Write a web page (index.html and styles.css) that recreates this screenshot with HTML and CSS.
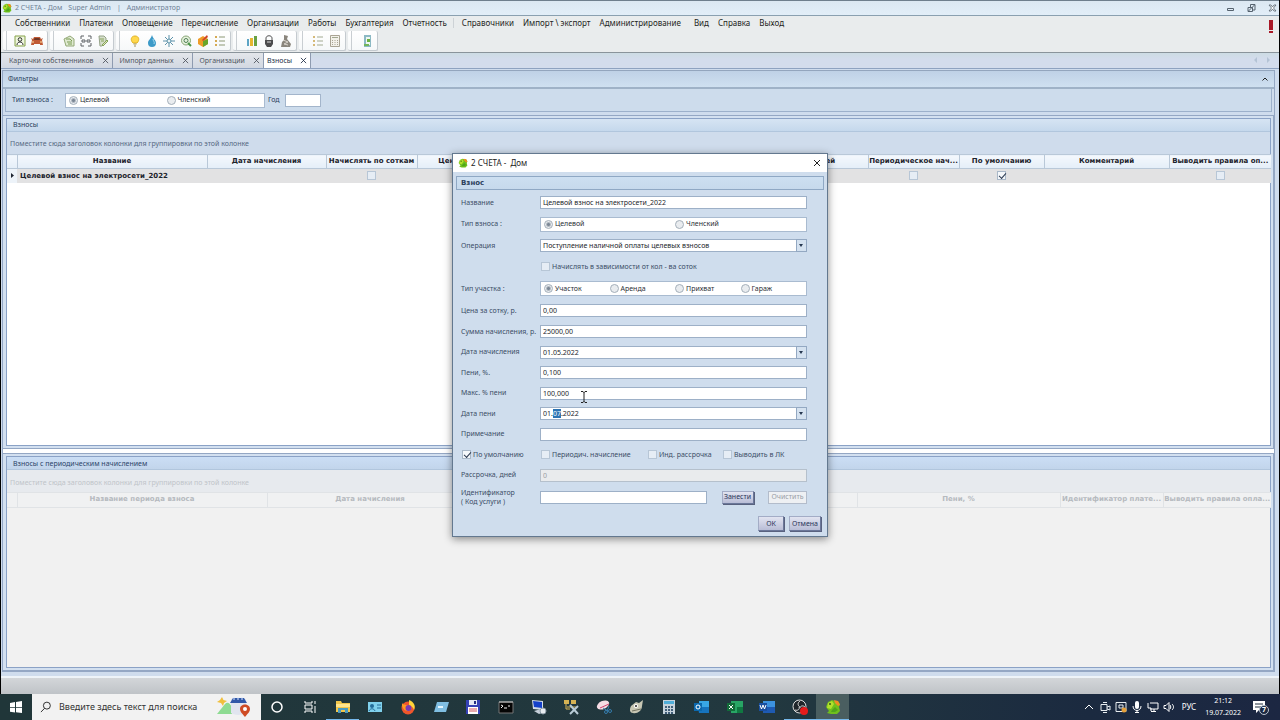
FILE: index.html
```html
<!DOCTYPE html>
<html lang="ru">
<head>
<meta charset="utf-8">
<title>2 СЧЕТА - Дом</title>
<link rel="stylesheet" href="styles.css">
<script src="app.js" defer></script>
</head>
<body>
<svg class="defs" aria-hidden="true">
  <symbol id="dino" viewBox="0 0 16 16"><path fill="#6fc01c" d="M1 8 3 3l4-2 3 1 3 0 2 3-1 3 1 4-3 3H6l-4-1 2-2z"/><path fill="#b2e02c" d="m3 4 4-2 2 3-3 5-4-1z"/><path fill="#f08c22" d="m9 1 4 1 2 4-2 1-3-3z"/><path fill="#4fa51b" d="m7 11 3-3 3 3-3 2H6z"/><circle cx="5" cy="5" r="1" fill="#365b13"/></symbol>
  <symbol id="cross" viewBox="0 0 8 8"><path d="m1 1 6 6M7 1 1 7" stroke="currentColor" fill="none"/></symbol>
</svg>
<div class="app">
  <header class="titlebar">
    <svg class="logo"><use href="#dino"/></svg>
    <span>2 СЧЕТА - Дом</span><span>Super Admin</span><span>|</span><span>Администратор</span>
    <div class="window-buttons">
      <button aria-label="Свернуть"><svg viewBox="0 0 8 8"><path d="M1 4.500h6v2H1z" fill="none" stroke="#56636f"/></svg></button>
      <button aria-label="Восстановить"><svg viewBox="0 0 8 8"><path d="M.5 3.500h4.500v4H.5zM3 3V.5h4.500V6H5M1 7l6-6" fill="none" stroke="#56636f"/></svg></button>
      <button aria-label="Закрыть"><svg viewBox="0 0 8 8"><path d="M.5 1h2L4 3l1.500-2h2L5 4l2.500 3h-2L4 5 2.500 7h-2L3 4z" fill="#fff" stroke="#56636f" stroke-width=".8"/></svg></button>
    </div>
  </header>
  <div class="ribbon">
    <nav class="menu">
      <button>Собственники</button><button>Платежи</button><button>Оповещение</button><button>Перечисление</button><button>Организации</button><button>Работы</button><button>Бухгалтерия</button><button>Отчетность</button><button class="split">Справочники</button><button>Импорт \ экспорт</button><button>Администрирование</button><button class="spaced">Вид</button><button>Справка</button><button>Выход</button>
    </nav>
    <div class="toolbar">
      <div class="tools first">
        <button aria-label="Собственник"><svg viewBox="0 0 12 12"><path d="M1 1h10v10H1z" fill="#eef6dc" stroke="#86a24a"/><circle cx="6" cy="4.500" r="1.800" fill="none" stroke="#333"/><path d="M3 10c0-4 6-4 6 0" fill="#fff" stroke="#333"/></svg></button>
        <button aria-label="Автомобиль"><svg viewBox="0 0 12 12"><path d="m0 3 2 1 1-2h6l1 2 2-1-1 2 1 5H9V9H3v1H0l1-5z" fill="#c05a35"/><path d="M3.500 3h5l.5 2H3z" fill="#6e3524"/><path d="M1 7h2m6 0h2" stroke="#ffe0a0"/></svg></button>
      </div>
      <div class="tools">
        <button aria-label="Платежи"><svg viewBox="0 0 12 12"><path d="m1 4 6-3 4 3v7H3z" fill="#dfead0" stroke="#93a877"/><path d="m3 4 4 0 2 2M4 7h5M5 9h4" stroke="#7b9b55" fill="none"/></svg></button>
        <button aria-label="Обмен"><svg viewBox="0 0 12 12"><path d="M1 4V1h3M8 1h3v3M11 8v3H8M4 11H1V8M2 5h3v2H2zM7 5h3v2H7z" fill="none" stroke="#5d6065"/></svg></button>
        <button aria-label="Квитанция"><svg viewBox="0 0 12 12"><path d="M2 1h5l2 2v3l-4 5H3z" fill="#d7dfcc" stroke="#94a287"/><path d="M3 4h4M4 6h3m-2 4 5-5 1 1-5 5z" stroke="#86a35b" fill="#dce6bd"/></svg></button>
      </div>
      <div class="tools">
        <button aria-label="Свет"><svg viewBox="0 0 12 12"><path d="M4 8C1 5 2 1 6 1s5 4 2 7z" fill="#ffd84c" stroke="#e0b323"/><path d="M4.500 9h3M5 11h2" stroke="#a0905c"/></svg></button>
        <button aria-label="Вода"><svg viewBox="0 0 12 12"><path d="M6 0C5 4 2 5 2 8a4 4 0 0 0 8 0C10 5 7 4 6 0z" fill="#3c9ac8"/><path d="M7 4c0 2 2 3 1 5" stroke="#a5dcf2" fill="none"/></svg></button>
        <button aria-label="Отопление"><svg viewBox="0 0 12 12"><path d="M6 0v12M0 6h12M2 2l8 8M10 2l-8 8" stroke="#5c92aa"/><circle cx="6" cy="6" r="2" fill="#e7f2f5" stroke="#5c92aa"/></svg></button>
        <button aria-label="Поиск"><svg viewBox="0 0 12 12"><circle cx="6" cy="5.500" r="4.500" fill="#e8f2df" stroke="#85a573"/><circle cx="6" cy="5.500" r="2" fill="none" stroke="#4f8054"/><path d="m8 8 3 3" stroke="#4a9649" stroke-width="2"/></svg></button>
        <button aria-label="Диаграмма"><svg viewBox="0 0 12 12"><path d="m1 4 5-3 5 3v5l-5 3-5-3z" fill="#ef9c28"/><path d="m6 6 5-2v5l-5 3z" fill="#68a52b"/><path d="m5 5 5-5 1 2-5 4z" fill="#cf4428"/></svg></button>
        <button aria-label="Список"><svg viewBox="0 0 12 12"><path d="M1 2h2M1 6h2M1 10h2" stroke="#d5aa53" stroke-width="2"/><path d="M5 2h6M5 6h6M5 10h6" stroke="#8c9874"/></svg></button>
      </div>
      <div class="tools">
        <button aria-label="График"><svg viewBox="0 0 12 12"><path d="M1 4h2v7H1z" fill="#5da4c5"/><path d="M4 3h3v8H4z" fill="#e6b62e"/><path d="M8 1h3v10H8z" fill="#68a143"/></svg></button>
        <button aria-label="Гиря"><svg viewBox="0 0 12 12"><path d="M3 5V3c0-3 6-3 6 0v2" fill="none" stroke="#555"/><path d="M2 5h8v4l-2 3H4L2 9z" fill="#4c4c4e"/><path d="M4 7h4" stroke="#ddd"/></svg></button>
        <button aria-label="Долги"><svg viewBox="0 0 12 12"><path d="m4 0 4 1-1 3 4 5-1 3H1l1-5 2-2z" fill="#8a857c"/><path d="m3 5 5 2-4 2 4 1" stroke="#d8d3cb" fill="none"/></svg></button>
      </div>
      <div class="tools">
        <button aria-label="Перечень"><svg viewBox="0 0 12 12"><path d="M1 2h2M1 6h2M1 10h2" stroke="#d5b978" stroke-width="2"/><path d="M5 2h6M5 6h6M5 10h6" stroke="#a2aa91"/></svg></button>
        <button aria-label="Калькулятор"><svg viewBox="0 0 12 12"><path d="M1.500.5h9v11h-9z" fill="#f3f1ea" stroke="#aaa494"/><path d="M3 2.500h6" stroke="#a2a890"/><path d="M3 5.500h6M3 7.500h6M3 9.500h6" stroke="#aaa494" stroke-dasharray="1 1.500"/></svg></button>
      </div>
      <div class="tools">
        <button aria-label="Телефон"><svg viewBox="0 0 12 12"><path d="M3 0h7v12H3z" fill="#8cb9c4"/><path d="M5 2h4v8H5z" fill="#eef8f2"/><path d="M6 4h3v3H6z" fill="#6bb13f"/><path d="M3 9h5v2H3z" fill="#73b55a"/></svg></button>
      </div>
    </div>
    <svg class="alert" viewBox="0 0 6 14"><path d="M1 0h4v10H1zM1 11h4v2H1z" fill="#a81826"/></svg>
  </div>
  <div class="tabs">
    <div class="tab"><button>Карточки собственников</button><button aria-label="Закрыть"><svg><use href="#cross"/></svg></button></div>
    <div class="tab"><button>Импорт данных</button><button aria-label="Закрыть"><svg><use href="#cross"/></svg></button></div>
    <div class="tab"><button>Организации</button><button aria-label="Закрыть"><svg><use href="#cross"/></svg></button></div>
    <div class="tab current"><button>Взносы</button><button aria-label="Закрыть"><svg><use href="#cross"/></svg></button></div>
    <svg class="tab-arrows" viewBox="0 0 18 6"><path d="M4 0v6L1 3zM14 0v6l3-3z" fill="#b4c3d5"/></svg>
  </div>
  <main class="workspace">
    <section class="filters">
      <h2 class="filters-head">Фильтры<svg viewBox="0 0 6 4"><path d="m.5 3.500 2.500-2.500 2.500 2.500" fill="none" stroke="#222"/></svg></h2>
      <div class="filters-body">
        <span class="filter-label">Тип взноса :</span>
        <div class="radios two filter-radios">
          <label><input type="radio" name="filter" checked>Целевой</label>
          <label><input type="radio" name="filter">Членский</label>
        </div>
        <label class="year">Год<input type="text"></label>
      </div>
    </section>
    <section class="pane upper">
      <div class="panel">
        <h2 class="panel-head">Взносы</h2>
        <p class="group-hint">Поместите сюда заголовок колонки для группировки по этой колонке</p>
        <table class="grid">
          <colgroup><col class="mark"><col class="w190"><col class="w119"><col class="w91"><col class="w112"><col class="w103"><col class="w103"><col class="w133"><col class="w91"><col class="w85"><col class="w125"><col class="w102"></colgroup>
          <thead><tr><th></th><th>Название</th><th>Дата начисления</th><th>Начислять по соткам</th><th>Цена за сотку, р.</th><th>Сумма</th><th>Пени, %</th><th>Рассрочка, дней</th><th>Периодическое нач...</th><th>По умолчанию</th><th>Комментарий</th><th>Выводить правила оп...</th></tr></thead>
          <tbody><tr><td class="pointer"><svg viewBox="0 0 3 5"><path d="M0 0v5l3-2.500z" fill="#1d2430"/></svg></td><td class="name">Целевой взнос на электросети_2022</td><td></td><td><input type="checkbox" class="faint" aria-label="Начислять по соткам"></td><td></td><td></td><td></td><td></td><td><input type="checkbox" class="faint" aria-label="Периодическое начисление"></td><td><input type="checkbox" checked aria-label="По умолчанию"></td><td></td><td><input type="checkbox" class="faint" aria-label="Выводить правила оплаты"></td></tr></tbody>
        </table>
      </div>
    </section>
    <section class="pane lower">
      <div class="panel inactive">
        <h2 class="panel-head">Взносы с периодическим начислением</h2>
        <p class="group-hint">Поместите сюда заголовок колонки для группировки по этой колонке</p>
        <table class="grid">
          <colgroup><col class="mark"><col class="w250"><col class="w206"><col class="w384"><col class="w203"><col class="w103"><col class="w108"></colgroup>
          <thead><tr><th></th><th>Название периода взноса</th><th>Дата начисления</th><th>Сумма</th><th>Пени, %</th><th>Идентификатор плате...</th><th>Выводить правила опла...</th></tr></thead>
        </table>
      </div>
    </section>
  </main>
  <div class="statusbar"></div>

  <div class="dialog" role="dialog" aria-label="2 СЧЕТА - Дом">
    <div class="dialog-title"><svg class="logo"><use href="#dino"/></svg><span>2 СЧЕТА -&nbsp; Дом</span><button aria-label="Закрыть"><svg><use href="#cross"/></svg></button></div>
    <h2 class="dialog-head">Взнос</h2>
    <form class="form">
      <label for="name">Название</label><input id="name" type="text" value="Целевой взнос на электросети_2022">
      <span>Тип взноса :</span>
      <div class="radios two"><label><input type="radio" name="kind" checked>Целевой</label><label><input type="radio" name="kind">Членский</label></div>
      <label for="op">Операция</label>
      <div class="combo"><select id="op"><option>Поступление наличной оплаты целевых взносов</option></select><span class="drop"></span></div>
      <label class="check from-second"><input type="checkbox" class="faint">Начислять в зависимости от кол - ва соток</label>
      <span>Тип участка :</span>
      <div class="radios four"><label><input type="radio" name="plot" checked>Участок</label><label><input type="radio" name="plot">Аренда</label><label><input type="radio" name="plot">Прихват</label><label><input type="radio" name="plot">Гараж</label></div>
      <label for="price">Цена за сотку, р.</label><input id="price" type="text" value="0,00">
      <label for="sum">Сумма начисления, р.</label><input id="sum" type="text" value="25000,00">
      <label for="date">Дата начисления</label>
      <div class="combo"><input id="date" type="text" value="01.05.2022"><button type="button" class="drop" aria-label="Выбрать дату начисления"></button></div>
      <label for="fine">Пени, %.</label><input id="fine" type="text" value="0,100">
      <label for="max">Макс. % пени</label><input id="max" type="text" value="100,000">
      <label for="finedate">Дата пени</label>
      <div class="combo"><input id="finedate" type="text" value="01.07.2022"><button type="button" class="drop" aria-label="Выбрать дату пени"></button></div>
      <label for="note">Примечание</label><input id="note" type="text">
      <label class="check"><input type="checkbox" checked>По умолчанию</label>
      <div class="checks"><label class="check"><input type="checkbox" class="faint">Периодич. начисление</label><label class="check"><input type="checkbox" class="faint">Инд. рассрочка</label><label class="check"><input type="checkbox" class="faint">Выводить в ЛК</label></div>
      <label for="days">Рассрочка, дней</label><input id="days" type="text" value="0" disabled>
      <label for="code">Идентификатор<br>( Код услуги )</label>
      <div class="code-row"><input id="code" type="text"><button type="button" class="btn">Занести</button><button type="button" class="btn" disabled>Очистить</button></div>
    </form>
    <div class="dialog-actions"><button class="btn">ОК</button><button class="btn">Отмена</button></div>
    <svg class="cursor" viewBox="0 0 8 12"><path d="M1 .5h2l1 1 1-1h2M4 1v10M1 11.500h2l1-1 1 1h2" fill="none" stroke="#222"/></svg>
  </div>
</div>

<footer class="taskbar">
  <button class="start" aria-label="Пуск"><svg viewBox="0 0 12 12"><path d="m0 2 5-1v5H0zM6 1l6-1v6H6zM0 6.800h5v4.700l-5-.8zM6 6.800h6V12l-6-.8z" fill="#fff"/></svg></button>
  <label class="search"><svg class="lens" viewBox="0 0 12 12"><circle cx="7.500" cy="4.500" r="3.800" fill="none" stroke="#222"/><path d="m5 7.500-4 4" stroke="#222"/></svg><input type="search" placeholder="Введите здесь текст для поиска">
    <svg class="weather" viewBox="0 0 34 20"><path d="m5 0 1.500 3L10 4 7 6 6 9 4 6 0 5l3-2z" fill="#f0bf3c"/><path d="M0 17 8 7c3-3 5 0 7 3v7z" fill="#8edb92"/><path d="M14 2h15v14c-6 3-12 2-15 0z" fill="#e1e5ef"/><path d="M16 1h11l3 5H13z" fill="#3158a8"/><path d="M17 0v3m4-3v3m4-3v3" stroke="#dbe7ff"/><path d="M28 20c-3-4-5-5-5-8 0-6 10-6 10 0 0 3-2 4-5 8z" fill="#cf4c25"/><circle cx="28" cy="12" r="2" fill="#fff"/></svg>
  </label>
  <div class="tasks">
    <button aria-label="Cortana"><svg viewBox="0 0 16 16"><circle cx="8" cy="8" r="5" fill="none" stroke="#fff" stroke-width="1.500"/></svg></button>
    <button aria-label="Представление задач"><svg viewBox="0 0 16 16"><path d="M3 6h7v4H3zM3 2v2h7V2M3 14v-2h7v2M13 2v3m0 2v7" fill="none" stroke="#fff"/></svg></button>
    <button class="running" aria-label="Проводник"><svg viewBox="0 0 16 16"><path d="M1 2h5l1 2h8v9H1z" fill="#f1c64b"/><path d="M1 5h14v3H1z" fill="#ffe58d"/><path d="M3 9h10v5h-3v-3H6v3H3z" fill="#4b9bc0"/></svg></button>
    <button aria-label="Панель"><svg viewBox="0 0 16 16"><path d="M1 3h14v10H1z" fill="#7fd0ec"/><circle cx="5" cy="7" r="2" fill="#246c99"/><path d="M2 12c1-3 5-3 6 0M10 6h4m-4 3h4" stroke="#246c99" fill="none"/></svg></button>
    <button aria-label="Firefox"><svg viewBox="0 0 16 16"><circle cx="8" cy="9" r="6.500" fill="#f0562b"/><path d="M2 3c0 3 2 2 4 3l3 0c4 1 3 6-1 6-3 0-5-2-6-5z" fill="#ff9b21"/><path d="M9 1c5 2 7 6 5 10-1-3-3-4-5-5z" fill="#ffd43a"/><circle cx="8.500" cy="9" r="3" fill="#7a3ab3"/></svg></button>
    <button aria-label="Папка"><svg viewBox="0 0 16 16"><path d="M4 3h12l-3 10H1z" fill="#80bfe2"/><path d="M5 8h5" stroke="#e6f7ff" stroke-width="2"/></svg></button>
    <button aria-label="Total Commander"><svg viewBox="0 0 16 16"><path d="M1 1h14v14H1z" fill="#3541b5"/><path d="M4 1h8v5H4z" fill="#e5e8f4"/><path d="M9 2h2v3H9z" fill="#222d81"/><path d="M3 8h10v7H3z" fill="#fff"/><path d="M4 10h8m-8 2h8" stroke="#d4545e"/></svg></button>
    <button aria-label="Консоль"><svg viewBox="0 0 16 16"><path d="M1 3h14v11H1z" fill="#050505" stroke="#777"/><path d="M1 3h14" stroke="#ccc"/><path d="m3 6 2 1-2 2m3 0h3m1-2h2" fill="none" stroke="#eee"/></svg></button>
    <button aria-label="Удалённый доступ"><svg viewBox="0 0 16 16"><path d="m1 1 11 1v9L2 10z" fill="#d1dce8"/><path d="m2 2 9 1v6L3 8z" fill="#1441ca"/><path d="m3 12 7-2 3 3-5 2z" fill="#c6d0da"/><circle cx="12" cy="12" r="3" fill="#e8ecf0" stroke="#8d9ba7"/></svg></button>
    <button aria-label="Инструменты"><svg viewBox="0 0 16 16"><path d="M1 1h5v4H1zM8 1h5v4H8z" fill="#d6b354"/><path d="M3 5v5h4M4 8h9" stroke="#d6b354" fill="none"/><path d="m7 6 8 9m0-8-8 8" stroke="#b9cbd6" stroke-width="2"/></svg></button>
    <button aria-label="Ножницы"><svg viewBox="0 0 16 16"><ellipse cx="7" cy="6" rx="6.500" ry="4" fill="#f5dce5" transform="rotate(-25 7 6)"/><path d="m4 9 9-4" stroke="#d04470"/><path d="m7 9 5 3m1-5-2 5" stroke="#357cac"/><circle cx="10" cy="13" r="1.500" fill="none" stroke="#357cac"/><circle cx="14" cy="12" r="1.500" fill="none" stroke="#357cac"/></svg></button>
    <button aria-label="GIMP"><svg viewBox="0 0 16 16"><path d="m2 7 5-4 3 1 4-3-1 6c0 5-5 8-9 7-3 0-4-3-2-7z" fill="#c8c7b4"/><circle cx="7" cy="7" r="2" fill="#fff"/><circle cx="7" cy="7" r="1" fill="#222"/><path d="m3 12 9-2" stroke="#71715f"/></svg></button>
    <button aria-label="Калькулятор"><svg viewBox="0 0 16 16"><path d="M2 1h12v14H2z" fill="#c6d2db"/><path d="M3 2h10v3H3z" fill="#4fadd8"/><path d="M4 8h8m-8 3h8m-8 3h8" stroke="#405e78" stroke-width="2" stroke-dasharray="2 1"/></svg></button>
    <button aria-label="Outlook"><svg viewBox="0 0 16 16"><path d="M5 2h10v12H5z" fill="#38a7e6"/><path d="m4 8 11 0v6H5z" fill="#1674be"/><path d="M0 4h8v8H0z" fill="#0b68ad"/><circle cx="4" cy="8" r="2" fill="none" stroke="#fff"/></svg></button>
    <button aria-label="Excel"><svg viewBox="0 0 16 16"><path d="M4 2h12v12H4z" fill="#28a565"/><path d="M10 8h6v6h-6z" fill="#107841"/><path d="M0 4h8v8H0z" fill="#126b39"/><path d="m2 6 4 4m0-4-4 4" stroke="#fff"/></svg></button>
    <button aria-label="Word"><svg viewBox="0 0 16 16"><path d="M4 2h12v12H4z" fill="#3c92df"/><path d="M4 8h12v6H4z" fill="#1e5ab2"/><path d="M0 4h8v8H0z" fill="#194e9e"/><path d="m1 6 1.500 4L4 6l1.500 4L7 6" stroke="#fff" fill="none"/></svg></button>
    <button class="running" aria-label="OBS"><svg viewBox="0 0 16 16"><circle cx="7.500" cy="7.500" r="6.500" fill="#20262b" stroke="#ddd"/><path d="M8 2c-3 2-2 5 0 6m5 0c-2-2-5-1-5 1m-5 2c3 1 5-1 4-3" fill="none" stroke="#ddd"/><circle cx="12" cy="12" r="4" fill="#e51c1c"/></svg></button>
    <button class="running active" aria-label="2 СЧЕТА"><svg><use href="#dino"/></svg></button>
  </div>
  <div class="tray">
    <svg viewBox="0 0 12 12"><path d="m2 8 4-4 4 4" fill="none" stroke="#fff"/></svg>
    <svg viewBox="0 0 12 12"><path d="M2 3.500h6v6H2zM8 6l3-1v4L8 8M4 1.500h4M4 11.500h4" fill="none" stroke="#e8edf0"/></svg>
    <svg viewBox="0 0 12 12"><path d="M1 1.500h10v9H1zM4 4h4v3H4z" fill="none" stroke="#e8edf0"/><circle cx="9" cy="9" r="2.500" fill="#e5a13b"/></svg>
    <svg viewBox="0 0 12 12"><rect x="4" y="0" width="4" height="8" rx="2" fill="#fff"/><path d="M2 5c0 6 8 6 8 0M6 9v3M4 11.500h4" fill="none" stroke="#fff"/></svg>
    <svg viewBox="0 0 12 12"><path d="M3 2h8v6H3M1 2v5h3v3M4 10.500h5M7 8v2" fill="none" stroke="#fff"/></svg>
    <svg viewBox="0 0 12 12"><path d="M1 4.500h2l3-3v9l-3-3H1zM7 4c1 1 1 3 0 4M9 3c2 2 2 4 0 6" fill="none" stroke="#fff"/></svg>
    <span class="lang">РУС</span>
    <span class="clock">21:12<br>19.07.2022</span>
    <span class="notice"><svg viewBox="0 0 12 12"><path d="M0 0h12v9H6l-3 3V9H0z" fill="#fff"/><path d="M2 3h8M2 6h8" stroke="#1c2c3d"/></svg><b>7</b></span>
  </div>
</footer>
</body>
</html>
```
FILE: styles.css
```css
* { box-sizing: border-box; }
body {
  margin: 0;
  min-height: 100vh;
  display: flex;
  flex-direction: column;
  font: 7px/10px "Noto Sans", sans-serif;
  color: #2c3f5c;
  background: #000;
}
button, input, select { font: inherit; color: inherit; margin: 0; padding: 0; border: 0; background: none; }
h2, p { margin: 0; font-weight: normal; font-size: inherit; }
svg { display: block; }
.defs { display: none; }

.app {
  flex: 1;
  display: flex;
  flex-direction: column;
  position: relative;
  margin: 0 1px;
  border-top: 1px solid #6f7f8d;
  background: #cfdced;
}
.titlebar {
  display: flex;
  align-items: center;
  gap: 6px;
  height: 15px;
  padding: 0 2px 0 1px;
  color: #6f8296;
  border-bottom: 1px solid #8aa0b0;
  background: linear-gradient(#dce8f2, #e2eef8);
}
.logo { width: 10px; height: 10px; }
.titlebar .logo { margin-right: -3px; }
.window-buttons { margin-left: auto; display: flex; gap: 12px; }
.window-buttons svg { width: 9px; height: 8px; }

.ribbon { position: relative; height: 37px; border-bottom: 1px solid #8a949b; background: #e9eced; }
.menu { display: flex; align-items: center; gap: 9px; height: 14px; padding-left: 14px; color: #1d1f22; font-size: 8px; }
.menu .split { padding-left: 8px; border-left: 1px solid #cdd2d6; margin-left: -3px; }
.menu .spaced { margin-left: 4px; }
.toolbar { display: flex; gap: 2px; padding: 1px 0 0 2px; }
.tools {
  display: flex;
  align-items: center;
  gap: 5px;
  height: 20px;
  padding: 0 4px 0 13px;
  border-radius: 2px;
  border-right: 1px solid #c4cacf;
  border-bottom: 1px solid #c4cacf;
  background: linear-gradient(90deg, transparent 3px, #c9ced2 3px, #c9ced2 4px, transparent 4px), linear-gradient(#fff, #f6f8f9);
}
.tools.first { padding-left: 11px; }
.tools svg { width: 12px; height: 12px; }
.alert { position: absolute; right: 5px; top: 4px; width: 6px; height: 14px; }

.tabs { display: flex; height: 16px; padding-left: 1px; border-bottom: 1px solid #8ea2c0; background: linear-gradient(#cddce4, #d3dcec 40%); }
.tab {
  display: flex;
  align-items: center;
  gap: 8px;
  padding: 0 3px 0 7px;
  color: #50565f;
  border-right: 1px solid #8e9bb0;
  background: linear-gradient(#e3e6ea, #d2d8e2);
}
.tab svg { width: 7px; height: 7px; }
.tab.current { padding: 0 3px 0 3px; color: #24324a; background: #fff; }
.tab-arrows { width: 18px; height: 6px; margin: 4px 8px 0 auto; }

.workspace { flex: 1; display: flex; flex-direction: column; margin: 1px 4px 0 1px; border: 1px solid #94a7c4; border-top-color: #93a5bd; }
.filters { padding: 0 2px 3px; }
.filters-head {
  display: flex;
  align-items: center;
  justify-content: space-between;
  height: 18px;
  margin: 0 -2px;
  padding: 0 6px 0 5px;
  border-bottom: 2px solid #9fb2c7;
  background: linear-gradient(#bfd1e6, #cfe0f0);
}
.filters-head svg { width: 6px; height: 4px; }
.filters-body { display: flex; align-items: center; height: 23px; padding-left: 6px; border: 1px solid #9cb0cb; border-top: 0; background: #cddcec; }
.filter-label { flex: 0 0 53px; }
.year { display: flex; align-items: center; gap: 5px; padding-left: 3px; }
.year input { width: 36px; height: 13px; border: 1px solid #a3b5cb; background: #fff; }

.pane { display: flex; padding: 2px 2px 2px 3px; border: 1px solid #94a7c4; background: #d3e0f0; }
.upper { flex: 336 1 0; border-left: 0; }
.lower { flex: 218 1 0; margin-top: 4px; border-left: 0; box-shadow: 0 -4px #fff; }
.panel { flex: 1; min-width: 0; border: 1px solid #8ba2c6; background: #fff; }
.panel-head { height: 13px; padding: 1px 6px; border-bottom: 1px solid #b1c6dd; background: linear-gradient(#d6e4f3, #c5d8ec); }
.group-hint { height: 22px; padding: 7px 3px; color: #566982; background: #cfdcec; }
.grid { width: 100%; table-layout: fixed; border-collapse: collapse; font-family: "DejaVu Sans", sans-serif; font-weight: bold; color: #1c222b; }
.grid th { height: 14px; padding: 0; line-height: 9px; white-space: nowrap; border: solid #b9c8d8; border-width: 1px 0 1px 1px; background: linear-gradient(#f4f8fd, #e4eef8); }
.grid th:first-child, .grid td:first-child { border-left: 0; padding: 0; }
.grid td { height: 14px; padding: 0 3px; text-align: center; background: #e2e2e3; }
.grid td.name { text-align: left; white-space: nowrap; }
.grid td.pointer { background: #edf3f9; }
.pointer svg { width: 3px; height: 5px; margin: 0 auto; }
.grid input { vertical-align: middle; }
.mark { width: 10px; }
.w85 { width: 85px; } .w91 { width: 91px; } .w102 { width: 102px; } .w103 { width: 103px; }
.w108 { width: 108px; } .w112 { width: 112px; } .w119 { width: 119px; } .w125 { width: 125px; } .w133 { width: 133px; }
.w190 { width: 190px; } .w203 { width: 203px; } .w206 { width: 206px; } .w250 { width: 250px; } .w384 { width: 384px; }
.inactive { background: #f1f1f1; }
.inactive .panel-head { padding-top: 2px; background: linear-gradient(#cbdef5, #c2d5eb); color: #2c4468; }
.inactive .group-hint { padding-top: 8px; background: #e7eaee; color: #bfc4c9; }
.inactive .grid { color: #b6babf; }
.inactive .grid th { height: 15px; background: #f0f1f2; border-color: #e0e3e6; }
.statusbar { height: 18px; margin-top: 4px; border-top: 2px solid #eef3f8; background: linear-gradient(#d3d6d9, #bfc3c7); }

input[type=checkbox] { appearance: none; width: 9px; height: 9px; border: 1px solid #a9b8c8; background: #f5f8fb; }
input[type=checkbox].faint { border-color: #b7c6d6; background: #e6edf5; }
input[type=checkbox]:checked::before { content: ""; display: block; width: 6px; height: 3px; margin: 1px 0 0 1px; border: solid #2b3950; border-width: 0 0 1px 1px; transform: rotate(-48deg); }
input[type=radio] { appearance: none; width: 9px; height: 9px; border: 1px solid #a4afba; border-radius: 50%; background: #e9ecef; }
input[type=radio]:checked { background: radial-gradient(#7c8896 0 1px, #e9ecef 3px); }
.radios { display: grid; align-items: center; height: 15px; padding-left: 3px; border: 1px solid #a9bbd0; background: #fff; color: #2b2f36; }
.radios.two { grid-template-columns: 1fr 1fr; }
.radios.four { grid-template-columns: repeat(4, 1fr); }
.radios label, .check { display: flex; align-items: center; gap: 2px; }
.filter-radios { width: 200px; }

.dialog {
  position: absolute;
  left: 50%;
  top: 152px;
  width: 376px;
  margin-left: -188px;
  border: 1px solid #63788f;
  background: #cfdded;
  box-shadow: 0 2px 8px rgba(0, 0, 0, .45);
}
.dialog-title { display: flex; align-items: center; gap: 3px; height: 18px; padding: 0 6px 0 5px; font-size: 8px; color: #222; background: #fff; }
.dialog-title button { margin-left: auto; }
.dialog-title button svg { width: 8px; height: 8px; }
.dialog-head { height: 14px; margin: 4px 3px 2px; padding: 1px 4px; font-family: "DejaVu Sans", sans-serif; font-weight: bold; border: 1px solid #8fa8c4; background: linear-gradient(#cddff1, #c6d9ec); }
.form {
  display: grid;
  grid-template-columns: 79px 1fr;
  grid-template-rows: 21px 22px 21px 21px 23px 21px 21px 20px 21px 20px 21px 20px 21px 20px 24px;
  align-items: center;
  padding: 0 20px 0 8px;
  color: #3b4d66;
}
.form > label, .form > span { white-space: nowrap; }
.form label[for=code] { line-height: 9px; }
.form input[type=text], .form select { width: 100%; height: 13px; padding: 0 2px; border: 1px solid #9db0c7; border-radius: 0; background: #fff; color: #23262b; outline: 0; }
.form input[type=text]:disabled { background: #e9ebed; color: #9a9ea4; border-color: #b5c0cc; }
.form select { appearance: none; }
.form ::selection { background: #2c74b3; color: #fff; }
.combo { position: relative; }
.drop { position: absolute; right: 0; top: 0; width: 11px; height: 13px; border: 1px solid #93a8c2; background: #d5e2f0; pointer-events: none; }
.drop::after { content: ""; position: absolute; left: 2px; top: 4px; border: solid transparent; border-width: 3px 2px 0; border-top-color: #25364f; }
.check { padding-left: 1px; }
.from-second { grid-column: 2; }
.checks { display: grid; grid-template-columns: 107px 75px 1fr; }
.code-row { display: flex; justify-content: space-between; align-items: center; }
.form .code-row input { width: 167px; }
.btn { min-width: 32px; height: 13px; border: 1px solid #6b7799; border-top-color: #a3acc6; border-left-color: #a3acc6; box-shadow: 1px 1px #59627f; background: linear-gradient(#e2e4f1, #b9bdd6); color: #2a3558; }
.btn:disabled { min-width: 39px; background: #eef0f3; color: #999ea6; border-color: #b3bccb; box-shadow: none; }
.dialog-actions { display: flex; justify-content: flex-end; gap: 5px; padding: 7px 6px 5px; }
.dialog-actions .btn { width: 26px; min-width: 26px; height: 15px; }
.dialog-actions .btn + .btn { width: 32px; }
.cursor { position: absolute; left: 127px; top: 237px; width: 8px; height: 12px; }

.taskbar {
  display: flex;
  height: 26px;
  color: #fff;
  background: linear-gradient(90deg, #203639 0, #22383f 60%, #1b2a40 85%, #1c2742);
}
.start { flex: 0 0 32px; display: grid; place-items: center; }
.start svg { width: 12px; height: 12px; }
.search { flex: 0 0 229px; display: flex; align-items: center; padding: 0 10px 0 8px; gap: 8px; background: #f2f2f2; }
.search input { flex: 1; min-width: 0; font-size: 9px; appearance: none; }
.search input::placeholder { color: #333; opacity: 1; }
.lens { width: 11px; height: 12px; }
.weather { width: 34px; height: 20px; }
.tasks { flex: 0 0 588px; display: flex; }
.tasks button { flex: 1; display: grid; place-items: center; }
.tasks svg { width: 16px; height: 16px; }
.tasks .running { box-shadow: inset 0 -1px #76b9ed; }
.tasks .active { background: #4a5e60; }
.tray { margin-left: auto; display: flex; align-items: center; gap: 4px; padding-right: 15px; }
.tray > svg { width: 12px; height: 12px; }
.lang { padding: 0 5px 0 3px; font-size: 8px; }
.clock { text-align: center; line-height: 12px; }
.notice { position: relative; margin-left: 8px; }
.notice svg { width: 12px; height: 12px; }
.notice b { position: absolute; left: 6px; top: 4px; width: 10px; height: 10px; line-height: 8px; text-align: center; border: 1px solid #bcc5d0; border-radius: 50%; background: #1c2942; }
```
FILE: app.js
```js
// Selects the month part of the penalty date.
const penaltyDate = document.getElementById("finedate");
penaltyDate.focus();
penaltyDate.setSelectionRange(3, 5);
```
